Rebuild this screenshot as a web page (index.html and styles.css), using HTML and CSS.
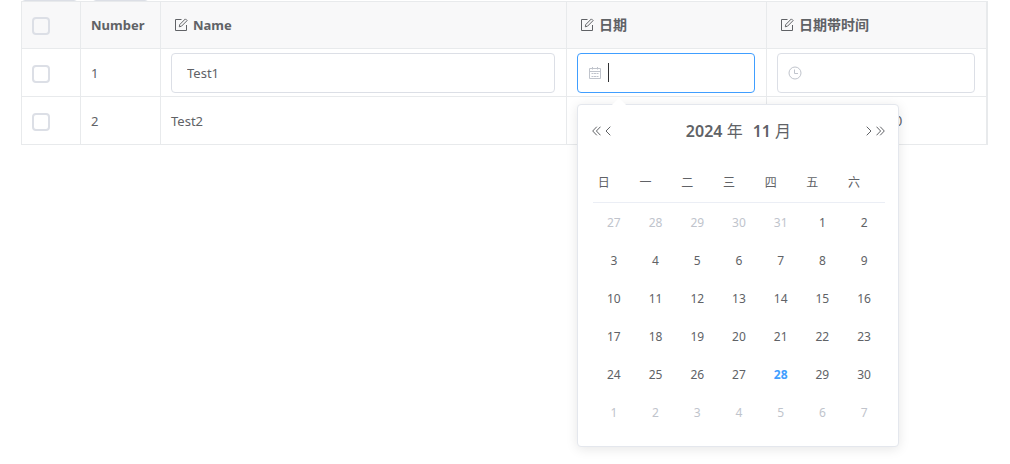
FILE: index.html
```html
<!DOCTYPE html>
<html lang="zh-CN">
<head>
  <meta charset="UTF-8">
  <meta name="viewport" content="width=device-width, initial-scale=1.0">
  <title>Editable Table</title>
  <link rel="stylesheet" href="styles.css">
</head>
<body>
  <svg class="sprite" aria-hidden="true">
    <symbol id="edit" viewBox="0 0 14 14">
      <path d="M7.5 1.5H1.500v11h11V7" />
      <path d="M5.300 8.800l.5-2.300 5.600-5.600 1.700 1.700-5.600 5.600z" />
    </symbol>
    <symbol id="calendar" viewBox="0 0 14 14">
      <path d="M1.500 2.500h11v10h-11z M1.500 5.500h11 M4.500 1v2.500 M9.500 1v2.500" />
      <path d="M3.500 7.500h2 M6 7.500h2 M8.500 7.500h2 M3.500 10.500h2 M6 10.500h2 M8.500 10.500h2" />
    </symbol>
    <symbol id="clock" viewBox="0 0 14 14">
      <circle cx="7" cy="7" r="6" />
      <path d="M6.500 3.500v4h3.500" />
    </symbol>
    <symbol id="left" viewBox="0 0 6 10">
      <path d="M5.300 .7L1 5l4.300 4.300" />
    </symbol>
    <symbol id="double-left" viewBox="0 0 9 10">
      <path d="M4.800 .7L.7 5l4.100 4.300 M8.500 .7L4.400 5l4.100 4.300" />
    </symbol>
  </svg>

  <div class="toolbar">
    <button class="tool-btn" aria-label="新增"></button>
    <button class="tool-btn" aria-label="删除"></button>
  </div>

  <table class="grid">
    <colgroup>
      <col class="col-check">
      <col class="col-number">
      <col>
      <col class="col-date">
      <col class="col-datetime">
    </colgroup>
    <thead>
      <tr>
        <th><input class="check" type="checkbox" aria-label="全选"></th>
        <th>Number</th>
        <th><div class="head"><svg class="icon-edit"><use href="#edit" /></svg><span>Name</span></div></th>
        <th><div class="head"><svg class="icon-edit"><use href="#edit" /></svg><span class="cjk">日期</span></div></th>
        <th><div class="head"><svg class="icon-edit"><use href="#edit" /></svg><span class="cjk">日期带时间</span></div></th>
      </tr>
    </thead>
    <tbody>
      <tr>
        <td><input class="check" type="checkbox" aria-label="选择 1"></td>
        <td>1</td>
        <td><div class="field"><input class="field-input" type="text" value="Test1" aria-label="Name"></div></td>
        <td>
          <div class="picker">
            <div class="field field-icon active">
              <svg class="icon-field"><use href="#calendar" /></svg>
              <span class="caret"></span>
              <input class="field-input" type="text" aria-label="日期">
            </div>
            <div class="popper">
              <div class="picker-header">
                <div class="arrows">
                  <button class="arrow" aria-label="前一年"><svg class="icon-double"><use href="#double-left" /></svg></button>
                  <button class="arrow" aria-label="上个月"><svg class="icon-single"><use href="#left" /></svg></button>
                </div>
                <div class="labels">
                  <button class="label"><b>2024</b> 年</button>
                  <button class="label"><b>11</b> 月</button>
                </div>
                <div class="arrows next">
                  <button class="arrow" aria-label="后一年"><svg class="icon-double"><use href="#double-left" /></svg></button>
                  <button class="arrow" aria-label="下个月"><svg class="icon-single"><use href="#left" /></svg></button>
                </div>
              </div>
              <table class="days">
                <thead>
                  <tr><th>日</th><th>一</th><th>二</th><th>三</th><th>四</th><th>五</th><th>六</th></tr>
                </thead>
                <tbody>
                  <tr>
                    <td class="other"><button>27</button></td>
                    <td class="other"><button>28</button></td>
                    <td class="other"><button>29</button></td>
                    <td class="other"><button>30</button></td>
                    <td class="other"><button>31</button></td>
                    <td><button>1</button></td>
                    <td><button>2</button></td>
                  </tr>
                  <tr>
                    <td><button>3</button></td>
                    <td><button>4</button></td>
                    <td><button>5</button></td>
                    <td><button>6</button></td>
                    <td><button>7</button></td>
                    <td><button>8</button></td>
                    <td><button>9</button></td>
                  </tr>
                  <tr>
                    <td><button>10</button></td>
                    <td><button>11</button></td>
                    <td><button>12</button></td>
                    <td><button>13</button></td>
                    <td><button>14</button></td>
                    <td><button>15</button></td>
                    <td><button>16</button></td>
                  </tr>
                  <tr>
                    <td><button>17</button></td>
                    <td><button>18</button></td>
                    <td><button>19</button></td>
                    <td><button>20</button></td>
                    <td><button>21</button></td>
                    <td><button>22</button></td>
                    <td><button>23</button></td>
                  </tr>
                  <tr>
                    <td><button>24</button></td>
                    <td><button>25</button></td>
                    <td><button>26</button></td>
                    <td><button>27</button></td>
                    <td class="today"><button>28</button></td>
                    <td><button>29</button></td>
                    <td><button>30</button></td>
                  </tr>
                  <tr>
                    <td class="other"><button>1</button></td>
                    <td class="other"><button>2</button></td>
                    <td class="other"><button>3</button></td>
                    <td class="other"><button>4</button></td>
                    <td class="other"><button>5</button></td>
                    <td class="other"><button>6</button></td>
                    <td class="other"><button>7</button></td>
                  </tr>
                </tbody>
              </table>
            </div>
          </div>
        </td>
        <td>
          <div class="field field-icon">
            <svg class="icon-field"><use href="#clock" /></svg>
            <input class="field-input" type="text" aria-label="日期带时间">
          </div>
        </td>
      </tr>
      <tr>
        <td><input class="check" type="checkbox" aria-label="选择 2"></td>
        <td>2</td>
        <td>Test2</td>
        <td></td>
        <td class="datetime">2024-11-28 00:00:00</td>
      </tr>
    </tbody>
  </table>
</body>
</html>
```
FILE: styles.css
```css
* {
  box-sizing: border-box;
}

body {
  min-height: 100vh;
  margin: 0;
  padding: 0 22px 0 21px;
  background-color: #fff;
  color: #606266;
  font-family: "Noto Sans", "Noto Sans CJK SC", sans-serif;
  font-size: 13px;
}

button,
input {
  font-family: inherit;
  color: inherit;
}

button {
  padding: 0;
  border: none;
  background: none;
  cursor: pointer;
}

svg {
  display: block;
  flex: none;
  fill: none;
  stroke: currentColor;
}

.sprite {
  display: none;
}

.toolbar {
  display: flex;
  align-items: flex-end;
  gap: 14px;
  height: 1px;
  overflow: hidden;
}

.tool-btn {
  flex: none;
  width: 57px;
  height: 32px;
  border: 1px solid #dcdfe6;
  border-radius: 4px;
}

/* table */
.grid {
  width: 100%;
  table-layout: fixed;
  border: 1px solid #e8eaec;
  border-bottom: none;
  border-spacing: 0;
}

.col-check {
  width: 59px;
}

.col-number {
  width: 80px;
}

.col-date {
  width: 200px;
}

.col-datetime {
  width: 220px;
}

.grid > * > tr > th,
.grid > * > tr > td {
  height: 48px;
  padding: 0 11px 0 10px;
  border-right: 1px solid #e8eaec;
  border-bottom: 1px solid #e8eaec;
  text-align: left;
  white-space: nowrap;
}

.grid > thead > tr > th {
  height: 47px;
  background-color: #f8f8f9;
}

.head {
  display: flex;
  align-items: center;
  gap: 5px;
  padding-left: 3px;
}

.cjk {
  font-size: 14px;
  line-height: 20px;
}

.datetime {
  font-family: Lato, sans-serif;
}

.icon-edit {
  width: 14px;
  height: 14px;
}

.check {
  appearance: none;
  display: block;
  width: 18px;
  height: 18px;
  margin: 2px 0 0;
  border: 2px solid #dcdfe6;
  border-radius: 4px;
  background-color: transparent;
}

/* inputs */
.field {
  display: flex;
  align-items: center;
  height: 40px;
  padding: 0 15px;
  border: 1px solid #dcdfe6;
  border-radius: 4px;
  background-color: #fff;
}

.field-icon {
  padding: 0 10px;
}

.field.active {
  border-color: #409eff;
}

.field-input {
  flex: 1;
  min-width: 0;
  padding: 0;
  border: none;
  outline: none;
  background: none;
  font-size: 13px;
}

.icon-field {
  width: 14px;
  height: 14px;
  color: #c0c4cc;
}

.caret {
  width: 1px;
  height: 19px;
  margin-left: 6px;
  background-color: #303133;
}

/* date picker */
.picker {
  position: relative;
}

.popper {
  position: absolute;
  top: 51px;
  left: 0;
  z-index: 10;
  width: 322px;
  padding: 11px 13px 15px 15px;
  border: 1px solid #e4e7ed;
  border-radius: 4px;
  background-color: #fff;
  box-shadow: 0 2px 12px rgba(0, 0, 0, 0.1);
}

.popper::before {
  content: "";
  position: absolute;
  top: -5px;
  left: 36px;
  width: 10px;
  height: 10px;
  background-color: #fff;
  transform: rotate(45deg);
}

.picker-header {
  display: flex;
  align-items: center;
  justify-content: space-between;
  height: 30px;
  margin: 0 0 16px -1px;
}

.arrows {
  display: flex;
  gap: 4px;
}

.next {
  transform: scaleX(-1);
}

.icon-double {
  width: 9px;
  height: 10px;
}

.icon-single {
  width: 6px;
  height: 10px;
}

.labels {
  display: flex;
  gap: 10px;
}

.label {
  font-size: 16px;
  line-height: 22px;
}

.label b {
  font-weight: 600;
}

.days {
  width: 100%;
  table-layout: fixed;
  border-spacing: 0;
  font-size: 12px;
}

.days th {
  height: 41px;
  padding: 0 20px 0 0;
  border-bottom: 1px solid #ebeef5;
  font-weight: 400;
  text-align: center;
}

.days td {
  height: 38px;
  padding: 2px 0 0;
  text-align: center;
}

.days button {
  width: 100%;
  height: 30px;
  font-size: 12px;
}

.days .other {
  color: #c0c4cc;
}

.days .today {
  color: #409eff;
  font-weight: 700;
}

.days .today button {
  font-weight: inherit;
}
```
